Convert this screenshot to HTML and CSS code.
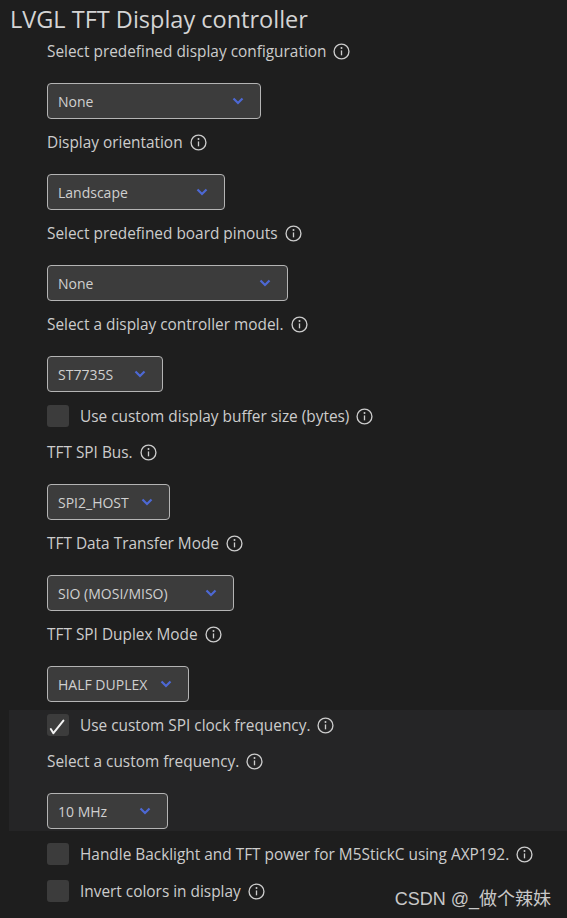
FILE: index.html
```html
<!DOCTYPE html>
<html>
<head>
<meta charset="utf-8">
<link rel="stylesheet" href="styles.css">
</head>
<body>
<h1 class="title">LVGL TFT Display controller</h1>
<div class="form">
  <div class="label">Select predefined display configuration <svg class="info" viewBox="0 0 16 16"><circle cx="8" cy="8" r="7"/><line x1="8" y1="7" x2="8" y2="11.6"/><circle class="dot" cx="8" cy="4.8" r="0.95"/></svg></div>
  <div class="select w-214"><span>None</span><svg class="chev" viewBox="0 0 12 8"><path d="M1.5 1.5 L6 6 L10.5 1.5"/></svg></div>

  <div class="label">Display orientation <svg class="info" viewBox="0 0 16 16"><circle cx="8" cy="8" r="7"/><line x1="8" y1="7" x2="8" y2="11.6"/><circle class="dot" cx="8" cy="4.8" r="0.95"/></svg></div>
  <div class="select w-178"><span>Landscape</span><svg class="chev" viewBox="0 0 12 8"><path d="M1.5 1.5 L6 6 L10.5 1.5"/></svg></div>

  <div class="label">Select predefined board pinouts <svg class="info" viewBox="0 0 16 16"><circle cx="8" cy="8" r="7"/><line x1="8" y1="7" x2="8" y2="11.6"/><circle class="dot" cx="8" cy="4.8" r="0.95"/></svg></div>
  <div class="select w-241"><span>None</span><svg class="chev" viewBox="0 0 12 8"><path d="M1.5 1.5 L6 6 L10.5 1.5"/></svg></div>

  <div class="label">Select a display controller model. <svg class="info" viewBox="0 0 16 16"><circle cx="8" cy="8" r="7"/><line x1="8" y1="7" x2="8" y2="11.6"/><circle class="dot" cx="8" cy="4.8" r="0.95"/></svg></div>
  <div class="select w-116"><span>ST7735S</span><svg class="chev" viewBox="0 0 12 8"><path d="M1.5 1.5 L6 6 L10.5 1.5"/></svg></div>

  <div class="check"><span class="box"></span><span>Use custom display buffer size (bytes)</span><svg class="info" viewBox="0 0 16 16"><circle cx="8" cy="8" r="7"/><line x1="8" y1="7" x2="8" y2="11.6"/><circle class="dot" cx="8" cy="4.8" r="0.95"/></svg></div>

  <div class="label">TFT SPI Bus. <svg class="info" viewBox="0 0 16 16"><circle cx="8" cy="8" r="7"/><line x1="8" y1="7" x2="8" y2="11.6"/><circle class="dot" cx="8" cy="4.8" r="0.95"/></svg></div>
  <div class="select w-123"><span>SPI2_HOST</span><svg class="chev" viewBox="0 0 12 8"><path d="M1.5 1.5 L6 6 L10.5 1.5"/></svg></div>

  <div class="label">TFT Data Transfer Mode <svg class="info" viewBox="0 0 16 16"><circle cx="8" cy="8" r="7"/><line x1="8" y1="7" x2="8" y2="11.6"/><circle class="dot" cx="8" cy="4.8" r="0.95"/></svg></div>
  <div class="select w-187"><span>SIO (MOSI/MISO)</span><svg class="chev" viewBox="0 0 12 8"><path d="M1.5 1.5 L6 6 L10.5 1.5"/></svg></div>

  <div class="label">TFT SPI Duplex Mode <svg class="info" viewBox="0 0 16 16"><circle cx="8" cy="8" r="7"/><line x1="8" y1="7" x2="8" y2="11.6"/><circle class="dot" cx="8" cy="4.8" r="0.95"/></svg></div>
  <div class="select w-142"><span>HALF DUPLEX</span><svg class="chev" viewBox="0 0 12 8"><path d="M1.5 1.5 L6 6 L10.5 1.5"/></svg></div>

  <div class="hl">
    <div class="check"><span class="box"><svg class="tick" viewBox="0 0 22 22"><path d="M3.8 15 L6.4 19.2 L16.4 6.6"/></svg></span><span>Use custom SPI clock frequency.</span><svg class="info" viewBox="0 0 16 16"><circle cx="8" cy="8" r="7"/><line x1="8" y1="7" x2="8" y2="11.6"/><circle class="dot" cx="8" cy="4.8" r="0.95"/></svg></div>
    <div class="label">Select a custom frequency. <svg class="info" viewBox="0 0 16 16"><circle cx="8" cy="8" r="7"/><line x1="8" y1="7" x2="8" y2="11.6"/><circle class="dot" cx="8" cy="4.8" r="0.95"/></svg></div>
    <div class="select w-121"><span>10 MHz</span><svg class="chev" viewBox="0 0 12 8"><path d="M1.5 1.5 L6 6 L10.5 1.5"/></svg></div>
  </div>

  <div class="check"><span class="box"></span><span>Handle Backlight and TFT power for M5StickC using AXP192.</span><svg class="info" viewBox="0 0 16 16"><circle cx="8" cy="8" r="7"/><line x1="8" y1="7" x2="8" y2="11.6"/><circle class="dot" cx="8" cy="4.8" r="0.95"/></svg></div>
  <div class="check"><span class="box"></span><span>Invert colors in display</span><svg class="info" viewBox="0 0 16 16"><circle cx="8" cy="8" r="7"/><line x1="8" y1="7" x2="8" y2="11.6"/><circle class="dot" cx="8" cy="4.8" r="0.95"/></svg></div>
</div>
<div class="watermark">CSDN @_做个辣妹</div>
</body>
</html>
```

FILE: styles.css
```css
html, body {
  margin: 0;
  padding: 0;
  background: #1e1e1e;
  height: 918px;
  overflow: hidden;
}
body {
  position: relative;
  color: #cccccc;
  font-family: "Open Sans", "Noto Sans", sans-serif;
  font-size: 15.4px;
}
.title {
  margin: 3px 0 6px 10px;
  height: 32px;
  line-height: 32px;
  font-size: 23.5px;
  font-weight: 400;
  color: #d4d4d4;
  white-space: nowrap;
}
.form {
  display: flex;
  flex-direction: column;
  align-items: flex-start;
  padding-left: 47px;
}
.label {
  display: flex;
  align-items: center;
  gap: 7px;
  height: 21px;
  line-height: 21px;
  white-space: nowrap;
}
.info {
  width: 17px;
  height: 17px;
  flex: none;
  fill: none;
  stroke: #cccccc;
  stroke-width: 1.25;
}
.info .dot {
  fill: #cccccc;
  stroke: none;
}
.select {
  box-sizing: border-box;
  height: 36px;
  display: flex;
  align-items: center;
  justify-content: space-between;
  padding: 0 16px 0 10px;
  background: #3c3c3c;
  border: 1px solid #b4b4b4;
  border-radius: 4px;
  color: #d0d0d0;
  font-size: 14px;
  white-space: nowrap;
}
.chev {
  width: 12px;
  height: 8px;
  fill: none;
  stroke: #4d68d4;
  stroke-width: 2.2;
}
.w-214 { width: 214px; }
.w-178 { width: 178px; }
.w-241 { width: 241px; }
.w-116 { width: 116px; }
.w-123 { width: 123px; }
.w-187 { width: 187px; }
.w-142 { width: 142px; }
.w-121 { width: 121px; }

.label + .select { margin-top: 21px; }
.select + .label { margin-top: 13px; }
.select + .check { margin-top: 13px; }
.check + .label { margin-top: 15px; }
.check + .check { margin-top: 15px; }
.select + .hl { margin-top: 8px; }
.hl + .check { margin-top: 12px; }

.check {
  display: flex;
  align-items: center;
  height: 22px;
  white-space: nowrap;
}
.check .box {
  width: 22px;
  height: 22px;
  flex: none;
  box-sizing: border-box;
  background: #3c3c3c;
  border-radius: 3px;
  margin-right: 11px;
  position: relative;
}
.check .info {
  margin-left: 7px;
}
.tick {
  position: absolute;
  left: 0;
  top: 0;
  width: 22px;
  height: 22px;
  fill: none;
  stroke: #f2f2f2;
  stroke-width: 2;
  stroke-linecap: round;
  stroke-linejoin: round;
}
.hl {
  align-self: stretch;
  display: flex;
  flex-direction: column;
  align-items: flex-start;
  margin-left: -38px;
  padding: 4px 0 2px 38px;
  background: #252526;
}
.watermark {
  position: absolute;
  right: 16px;
  top: 884px;
  font-family: "Liberation Sans", "Noto Sans CJK SC", sans-serif;
  font-size: 18px;
  color: #c8c8c8;
  white-space: nowrap;
}
```
